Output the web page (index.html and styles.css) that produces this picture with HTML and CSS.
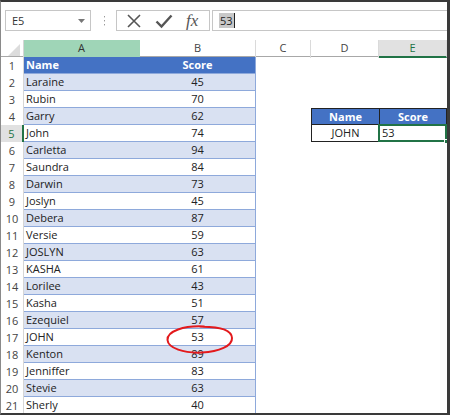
FILE: index.html
```html
<!DOCTYPE html>
<html>
<head>
<meta charset="utf-8">
<link rel="stylesheet" href="styles.css">
</head>
<body>
<div class="frame">
  <div class="fbar">
    <div class="namebox"><span>E5</span><svg class="dd" width="7" height="4" viewBox="0 0 7 4"><path d="M0 0H7L3.5 4Z" fill="#777"/></svg></div>
    <svg class="dots" width="3" height="21" viewBox="0 0 3 21"><rect x="1" y="6" width="1" height="1.4" fill="#999"/><rect x="1" y="10" width="1" height="1.4" fill="#999"/><rect x="1" y="14" width="1" height="1.4" fill="#999"/></svg>
    <div class="iconbox">
      <svg width="16" height="16" viewBox="0 0 16 16"><path d="M2 2L14 14M14 2L2 14" stroke="#555" stroke-width="1.6" fill="none"/></svg>
      <svg width="18" height="16" viewBox="0 0 18 16"><path d="M1.5 8.5L6.5 13.5L16.5 2.5" stroke="#555" stroke-width="2.4" fill="none"/></svg>
      <span class="fx">fx</span>
    </div>
    <div class="finput"><span class="sel">53</span><span class="caret"></span></div>
  </div>
  <div class="sheet">
    <div class="row hdr">
      <div class="corner"><svg width="12" height="12" viewBox="0 0 12 12"><path d="M12 0V12H0Z" fill="#dcdcdc"/></svg></div>
      <div class="ch cha">A</div><div class="ch">B</div><div class="ch">C</div><div class="ch">D</div><div class="ch che">E</div><div class="ch chr"></div>
    </div>
    <div class="row"><div class="rn">1</div><div class="c a th">Name</div><div class="c b th">Score</div><div class="c"></div><div class="c"></div><div class="c"></div></div>
    <div class="row band"><div class="rn">2</div><div class="c a">Laraine</div><div class="c b">45</div><div class="c"></div><div class="c"></div><div class="c"></div></div>
    <div class="row"><div class="rn">3</div><div class="c a">Rubin</div><div class="c b">70</div><div class="c"></div><div class="c"></div><div class="c"></div></div>
    <div class="row band"><div class="rn">4</div><div class="c a">Garry</div><div class="c b">62</div><div class="c"></div><div class="c d th2">Name</div><div class="c e th2">Score</div></div>
    <div class="row"><div class="rn rsel">5</div><div class="c a">John</div><div class="c b">74</div><div class="c"></div><div class="c d td2">JOHN</div><div class="c e td2 cur">53</div></div>
    <div class="row band"><div class="rn">6</div><div class="c a">Carletta</div><div class="c b">94</div><div class="c"></div><div class="c"></div><div class="c"></div></div>
    <div class="row"><div class="rn">7</div><div class="c a">Saundra</div><div class="c b">84</div><div class="c"></div><div class="c"></div><div class="c"></div></div>
    <div class="row band"><div class="rn">8</div><div class="c a">Darwin</div><div class="c b">73</div><div class="c"></div><div class="c"></div><div class="c"></div></div>
    <div class="row"><div class="rn">9</div><div class="c a">Joslyn</div><div class="c b">45</div><div class="c"></div><div class="c"></div><div class="c"></div></div>
    <div class="row band"><div class="rn">10</div><div class="c a">Debera</div><div class="c b">87</div><div class="c"></div><div class="c"></div><div class="c"></div></div>
    <div class="row"><div class="rn">11</div><div class="c a">Versie</div><div class="c b">59</div><div class="c"></div><div class="c"></div><div class="c"></div></div>
    <div class="row band"><div class="rn">12</div><div class="c a">JOSLYN</div><div class="c b">63</div><div class="c"></div><div class="c"></div><div class="c"></div></div>
    <div class="row"><div class="rn">13</div><div class="c a">KASHA</div><div class="c b">61</div><div class="c"></div><div class="c"></div><div class="c"></div></div>
    <div class="row band"><div class="rn">14</div><div class="c a">Lorilee</div><div class="c b">43</div><div class="c"></div><div class="c"></div><div class="c"></div></div>
    <div class="row"><div class="rn">15</div><div class="c a">Kasha</div><div class="c b">51</div><div class="c"></div><div class="c"></div><div class="c"></div></div>
    <div class="row band"><div class="rn">16</div><div class="c a">Ezequiel</div><div class="c b">57</div><div class="c"></div><div class="c"></div><div class="c"></div></div>
    <div class="row"><div class="rn">17</div><div class="c a">JOHN</div><div class="c b">53</div><div class="c"></div><div class="c"></div><div class="c"></div></div>
    <div class="row band"><div class="rn">18</div><div class="c a">Kenton</div><div class="c b">89</div><div class="c"></div><div class="c"></div><div class="c"></div></div>
    <div class="row"><div class="rn">19</div><div class="c a">Jenniffer</div><div class="c b">83</div><div class="c"></div><div class="c"></div><div class="c"></div></div>
    <div class="row band"><div class="rn">20</div><div class="c a">Stevie</div><div class="c b">63</div><div class="c"></div><div class="c"></div><div class="c"></div></div>
    <div class="row"><div class="rn">21</div><div class="c a">Sherly</div><div class="c b">40</div><div class="c"></div><div class="c"></div><div class="c"></div></div>
    <svg class="circle" width="72" height="34" viewBox="0 0 72 34"><path d="M40 3.5C20 2.5 3 8 3.5 17C4 25 20 30.5 38 29.5C55 28.5 68.5 23 68 15C67.5 7.5 56 3.5 36 3.8" stroke="#e3191c" stroke-width="2" fill="none" stroke-linecap="round"/></svg>
  </div>
</div>
</body>
</html>
```
FILE: styles.css
```css
html, body {
  margin: 0;
  padding: 0;
  background: #fff;
}
.frame {
  width: 450px;
  height: 415px;
  box-sizing: border-box;
  border-top: 2px solid #3a3a3a;
  border-right: 3px solid #3a3a3a;
  border-bottom: 2px solid #3a3a3a;
  border-left: 1px solid #8a8a8a;
  overflow: hidden;
  font-family: "Open Sans", "Noto Sans", sans-serif;
  font-size: 11px;
  color: #222;
  background: #fff;
}
.fbar {
  height: 38px;
  box-sizing: border-box;
  padding: 8px 0 0 4px;
  display: flex;
  align-items: flex-start;
  background: #fff;
}
.namebox {
  width: 86px;
  height: 21px;
  box-sizing: border-box;
  border: 1px solid #c6c6c6;
  display: flex;
  align-items: center;
  justify-content: space-between;
  padding: 0 5px 0 6px;
  color: #333;
}
.dots {
  margin-left: 12px;
}
.iconbox {
  margin-left: 10px;
  width: 94px;
  height: 21px;
  box-sizing: border-box;
  border: 1px solid #c6c6c6;
  display: flex;
  align-items: center;
  padding: 0 0 0 9px;
  gap: 13px;
}
.fx {
  font-family: "Liberation Serif", serif;
  font-style: italic;
  font-size: 17px;
  color: #555;
  line-height: 1;
  margin-left: 0;
}
.finput {
  margin-left: 2px;
  flex: 1;
  height: 21px;
  box-sizing: border-box;
  border: 1px solid #c6c6c6;
  border-right: none;
  display: flex;
  align-items: center;
  padding-left: 6px;
}
.sel {
  background: #c8c8c8;
  padding: 0 1px;
  line-height: 15px;
  color: #222;
}
.caret {
  width: 1px;
  height: 15px;
  background: #222;
}
.sheet {
  position: relative;
}
.row {
  display: grid;
  grid-template-columns: 23px 116px 116px 55px 68px 68px;
  height: 17px;
}
.row.hdr {
  grid-template-columns: 23px 116px 116px 55px 68px 68px 1fr;
  border-bottom: 1px solid #a8a8a8;
  box-sizing: border-box;
}
.corner {
  display: flex;
  align-items: flex-end;
  justify-content: flex-end;
  padding: 0 3px 2px 0;
  border-right: 1px solid #d6d6d6;
}
.ch {
  text-align: center;
  line-height: 16px;
  color: #444;
  border-right: 1px solid #dadada;
  box-sizing: border-box;
}
.cha {
  background: #9fd5b7;
  color: #333;
  border-right-color: #9fd5b7;
}
.che {
  background: #e1e1e1;
  color: #217346;
  border-bottom: 2px solid #217346;
}
.chr {
  border-right: none;
}
.rn {
  text-align: center;
  line-height: 17px;
  color: #444;
  border-right: 1px solid #d6d6d6;
  box-sizing: border-box;
}
.rn.rsel {
  background: #e1e1e1;
  color: #217346;
  border-right: 2px solid #217346;
}
.c {
  box-sizing: border-box;
  line-height: 16px;
  white-space: nowrap;
  overflow: hidden;
}
.a, .b {
  border-bottom: 1px solid #8ea9db;
}
.a {
  padding-left: 2px;
}
.b {
  text-align: center;
  border-right: 1px solid #8ea9db;
}
.band .a, .band .b {
  background: #d9e1f2;
}
.th {
  background: #4472c4 !important;
  color: #fff;
  font-weight: bold;
}
.th2 {
  background: #4472c4;
  color: #fff;
  font-weight: bold;
  text-align: center;
  border-top: 1px solid #222;
  border-left: 1px solid #222;
  border-bottom: 1px solid #222;
}
.e.th2 {
  border-right: 1px solid #222;
}
.td2 {
  border-left: 1px solid #222;
  border-bottom: 1px solid #222;
}
.d.td2 {
  text-align: center;
}
.e.td2 {
  border-right: 1px solid #222;
  padding-left: 2px;
}
.cur {
  position: relative;
  overflow: visible;
}
.cur::after {
  content: "";
  position: absolute;
  left: -2px;
  top: -1px;
  right: -1px;
  bottom: -1px;
  border: 2px solid #217346;
}
.cur::before {
  content: "";
  position: absolute;
  right: -3px;
  bottom: -3px;
  width: 5px;
  height: 5px;
  background: #217346;
  border: 1px solid #fff;
  box-sizing: border-box;
  z-index: 2;
}
.circle {
  position: absolute;
  left: 163px;
  top: 283px;
}
```
